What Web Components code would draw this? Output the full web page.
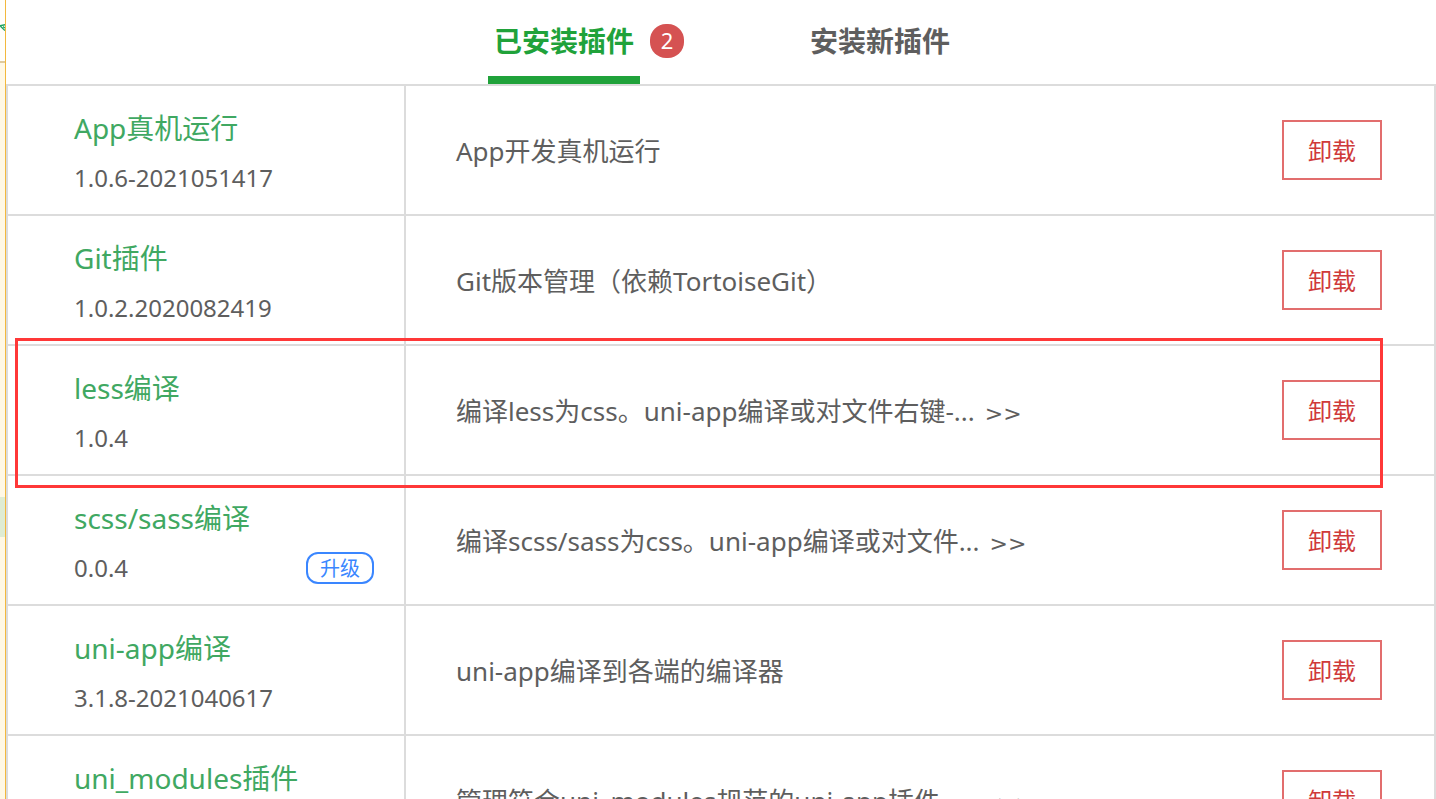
<!DOCTYPE html>
<html lang="zh-CN">
<head>
<meta charset="utf-8">
<title>插件安装</title>
<style>
  body { margin: 0; background: #fff; color: #5e5e5e; font-family: "Noto Sans", "Noto Sans CJK SC", sans-serif; }
</style>
</head>
<body>
<plugin-window>
  <editor-edge slot="edge"></editor-edge>
  <tab-bar slot="tabs">
    <tab-item active count="2">已安装插件</tab-item>
    <tab-item>安装新插件</tab-item>
  </tab-bar>
  <plugin-table></plugin-table>
</plugin-window>

<script>
const define = (name, html, setup) => {
  const template = document.createElement('template');
  template.innerHTML = html;
  customElements.define(name, class extends HTMLElement {
    constructor() {
      super();
      this.attachShadow({ mode: 'open' }).append(template.content.cloneNode(true));
    }
    connectedCallback() { if (setup) setup(this, this.shadowRoot); }
  });
};

define('plugin-window', `
  <style>
    :host { display: flex; height: 100vh; overflow: hidden; }
    main { flex: 1; min-width: 0; overflow: auto; scrollbar-width: none; }
  </style>
  <slot name="edge"></slot>
  <main><slot name="tabs"></slot><slot></slot></main>`);

/* The sliver of the editor that stays visible beside the window */
define('editor-edge', `
  <style>
    :host { display: flex; flex-direction: column; width: 5px; flex: none; overflow: hidden;
            border-right: 1px solid #f3b83c; background: #fff8e5; }
    .bar { height: 61px; background: #fffefa; border-bottom: 2px solid #dfca9c; }
    .line { height: 40px; margin-top: 434px; background: #dfecd3; }
    svg { display: block; margin-top: 23px; }
  </style>
  <div class="bar">
    <svg width="5" height="9" viewBox="0 0 5 9" fill="none" stroke="#1fa362" stroke-width="1.4" aria-hidden="true"><path d="M0 2.8 5 1.8M.4 3.2 5 7.6M3 3.6 5 5"/></svg>
  </div>
  <div class="line"></div>`);

define('tab-bar', `
  <style>
    :host { display: block; }
    nav { display: flex; justify-content: center; gap: 164px; height: 84px; padding-left: 2px; }
  </style>
  <nav aria-label="插件"><slot></slot></nav>`);

define('tab-item', `
  <style>
    :host { display: block; position: relative; }
    button { height: 84px; padding: 6px 6px 0; border: 0; border-bottom: 8px solid transparent;
             background: none; font: bold 28px/70px "Noto Sans", "Noto Sans CJK SC", sans-serif;
             color: #5e5e5e; cursor: pointer; white-space: nowrap; }
    :host([active]) button { color: #20a23a; border-color: #20a23a; }
    .badge { position: absolute; left: 100%; top: 24px; margin-left: 10px; width: 34px;
             padding-bottom: 2px; border-radius: 16px; background: #d55252; color: #fff;
             font-size: 22px; line-height: 32px; text-align: center; }
    .badge:empty { display: none; }
  </style>
  <button type="button"><slot></slot></button><span class="badge"></span>`,
  (host, root) => { root.querySelector('.badge').textContent = host.getAttribute('count') || ''; });

define('plugin-name', `
  <style>
    :host { display: grid; grid-template-columns: 1fr auto; align-items: center; row-gap: 10px; padding: 6px 30px 0 66px; }
    .name { grid-column: 1 / -1; font-size: 28px; line-height: 40px; color: #40a862; white-space: nowrap; }
    .version { font-size: 24px; line-height: 40px; }
  </style>
  <span class="name"><slot></slot></span>
  <span class="version"><slot name="version"></slot></span>
  <slot name="action"></slot>`);

define('upgrade-button', `
  <style>
    :host { display: block; }
    button { display: block; width: 68px; height: 32px; padding: 2px 0 0; border: 2px solid #3a86ff; border-radius: 12px;
             background: none; color: #3a86ff; font: 20px/26px "Noto Sans", "Noto Sans CJK SC", sans-serif; cursor: pointer; }
  </style>
  <button type="button"><slot></slot></button>`);

define('plugin-summary', `
  <style>
    :host { display: flex; align-items: center; justify-content: space-between; padding: 0 52px 0 50px; }
    p { margin: 0; font-size: 26px; line-height: 40px; padding-top: 2px; }
    a { margin-left: 10px; color: inherit; text-decoration: none; font: 22px/22px "DejaVu Sans", sans-serif; }
    a[hidden] { display: none; }
    button { flex: none; width: 100px; height: 60px; padding: 2px 0 0; border: 2px solid #e26d6d;
             background: none; color: #cf3a3a; font: 24px/54px "Noto Sans", "Noto Sans CJK SC", sans-serif; cursor: pointer; }
  </style>
  <p><slot></slot><a href="#more">&gt;&gt;</a></p>
  <button type="button">卸载</button>`,
  (host, root) => { root.querySelector('a').hidden = !host.hasAttribute('more'); });

define('highlight-frame', `
  <style>
    :host { display: block; position: absolute; z-index: 1; inset: -8px 51px -12px 7px;
            border: 3px solid #ff3838; pointer-events: none; }
  </style>`);

const plugins = [
  { name: 'App真机运行', version: '1.0.6-2021051417', text: 'App开发真机运行' },
  { name: 'Git插件', version: '1.0.2.2020082419', text: 'Git版本管理（依赖TortoiseGit）' },
  { name: 'less编译', version: '1.0.4', text: '编译less为css。uni-app编译或对文件右键-...', more: true, marked: true },
  { name: 'scss/sass编译', version: '0.0.4', text: '编译scss/sass为css。uni-app编译或对文件...', more: true, upgrade: true },
  { name: 'uni-app编译', version: '3.1.8-2021040617', text: 'uni-app编译到各端的编译器' },
  { name: 'uni_modules插件', version: '', text: '管理符合uni_modules规范的uni-app插件，...', more: true }
];

define('plugin-table', `
  <style>
    :host { display: block; }
    table { width: 100%; table-layout: fixed; border-spacing: 0; border: 2px solid #dcdcdc; border-bottom: 0; }
    tr { position: relative; }
    th, td { height: 128px; padding: 0; border-bottom: 2px solid #dcdcdc; font-weight: normal; text-align: left; vertical-align: middle; }
    th { border-right: 2px solid #dcdcdc; }
    .names { width: 398px; }
    plugin-name { min-height: 90px; grid-template-rows: 40px 40px; }
  </style>
  <table>
    <colgroup><col class="names"><col></colgroup>
    <tbody></tbody>
  </table>`,
  (host, root) => {
    root.querySelector('tbody').innerHTML = plugins.map(p => `
      <tr>
        <th scope="row"><plugin-name>${p.name}<span slot="version">${p.version}</span>${p.upgrade ? '<upgrade-button slot="action">升级</upgrade-button>' : ''}</plugin-name></th>
        <td><plugin-summary ${p.more ? 'more' : ''}>${p.text}</plugin-summary>${p.marked ? '<highlight-frame></highlight-frame>' : ''}</td>
      </tr>`).join('');
  });
</script>
</body>
</html>
